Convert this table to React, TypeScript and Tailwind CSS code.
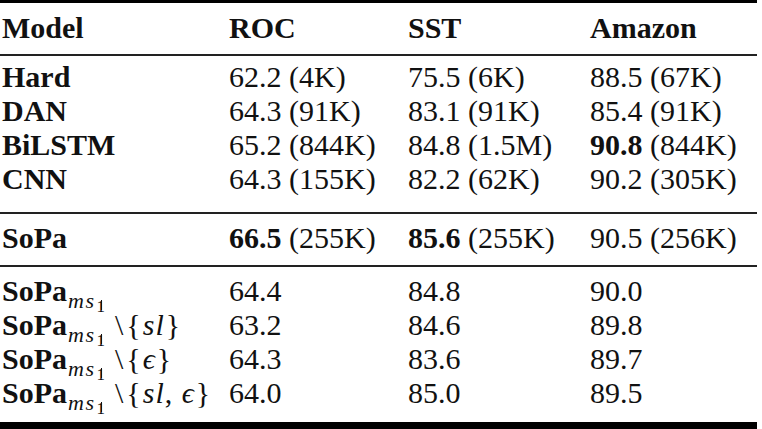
import React from "react";

const Cell = ({ children, first }: { children?: React.ReactNode; first?: boolean }) => (
  <div className={first ? "pl-[2px] whitespace-nowrap" : "whitespace-nowrap"}>{children}</div>
);

const Row = ({ cells }: { cells: React.ReactNode[] }) => (
  <div className="grid grid-cols-[229px_179px_182px_1fr] h-[34px] leading-[34px]">
    {cells.map((c, i) => (
      <Cell key={i} first={i === 0}>
        {c}
      </Cell>
    ))}
  </div>
);

const BbOne = () => (
  <span className="relative inline-block top-[4px] text-[17px] leading-none ml-[1px]">
    1
    <span className="absolute left-[5px] top-[2px] w-[1px] h-[10px] bg-[#111]" />
  </span>
);

const Sub = () => (
  <span className="relative top-[7px] leading-none ml-[1px]">
    <span className="italic text-[22px] tracking-[1.5px]">ms</span>
    <BbOne />
  </span>
);

const SoPaMs = ({ rest }: { rest?: React.ReactNode }) => (
  <span>
    <b>SoPa</b>
    <Sub />
    {rest}
  </span>
);

const Set = ({ children }: { children: React.ReactNode }) => (
  <span className="ml-[10px]">
    \<span className="ml-[3px] mr-[2px]">{"{"}</span>
    <span className="tracking-[1px]">{children}</span>
    <span className="ml-[1px]">{"}"}</span>
  </span>
);

export default function App() {
  return (
    <div className="w-[762px] h-[429px] bg-white overflow-hidden text-[#111] text-[30px] font-['Liberation_Serif',serif]">
      <div className="w-[757px] flex flex-col">
        <div className="h-[3px] bg-black" />
        <div className="pt-[8px] pb-[9px] font-bold">
          <Row cells={["Model", "ROC", "SST", "Amazon"]} />
        </div>
        <div className="h-[2px] bg-[#222]" />
        <div className="pt-[4px] pb-[16px]">
          <Row cells={[<b>Hard</b>, "62.2 (4K)", "75.5 (6K)", "88.5 (67K)"]} />
          <Row cells={[<b>DAN</b>, "64.3 (91K)", "83.1 (91K)", "85.4 (91K)"]} />
          <Row
            cells={[
              <b>BiLSTM</b>,
              "65.2 (844K)",
              "84.8 (1.5M)",
              <span>
                <b>90.8</b> (844K)
              </span>,
            ]}
          />
          <Row cells={[<b>CNN</b>, "64.3 (155K)", "82.2 (62K)", "90.2 (305K)"]} />
        </div>
        <div className="h-[2px] bg-[#222]" />
        <div className="pt-[7px] pb-[10px]">
          <Row
            cells={[
              <b>SoPa</b>,
              <span>
                <b>66.5</b> (255K)
              </span>,
              <span>
                <b>85.6</b> (255K)
              </span>,
              "90.5 (256K)",
            ]}
          />
        </div>
        <div className="h-[2px] bg-[#222]" />
        <div className="pt-[7px] pb-[12px]">
          <Row cells={[<SoPaMs />, "64.4", "84.8", "90.0"]} />
          <Row
            cells={[
              <SoPaMs
                rest={
                  <Set>
                    <i>sl</i>
                  </Set>
                }
              />,
              "63.2",
              "84.6",
              "89.8",
            ]}
          />
          <Row
            cells={[
              <SoPaMs
                rest={
                  <Set>
                    <i>ϵ</i>
                  </Set>
                }
              />,
              "64.3",
              "83.6",
              "89.7",
            ]}
          />
          <Row
            cells={[
              <SoPaMs
                rest={
                  <Set>
                    <i>sl</i>, <i>ϵ</i>
                  </Set>
                }
              />,
              "64.0",
              "85.0",
              "89.5",
            ]}
          />
        </div>
        <div className="h-[7px] bg-black" />
      </div>
    </div>
  );
}
